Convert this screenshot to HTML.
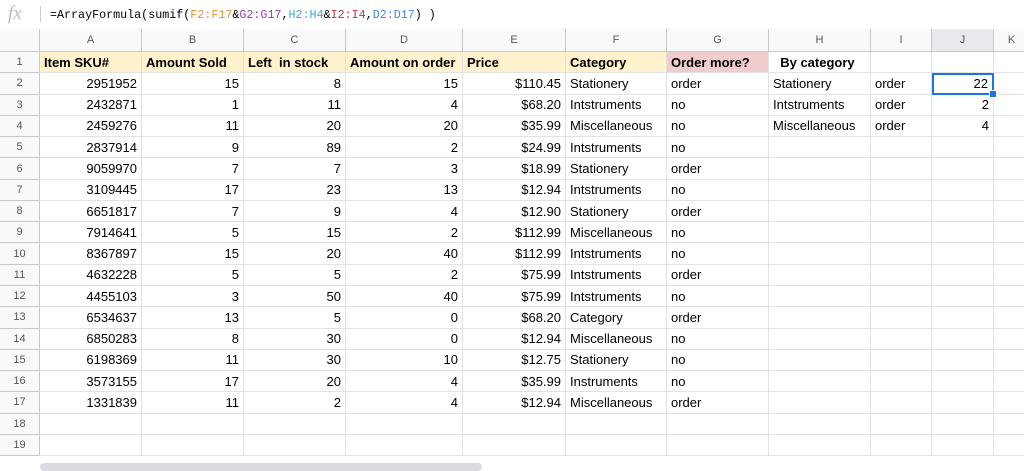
<!DOCTYPE html><html><head><style>
body{margin:0;width:1024px;height:469px;overflow:hidden;background:#fff;font-family:"Liberation Sans",Arial,sans-serif;font-size:13px;color:#000;position:relative}
.fb{position:absolute;left:0;top:0;width:1024px;height:29px;border-bottom:1px solid #c0c0c0;background:#fff}
.fx{position:absolute;left:8px;top:3px;font-family:"Liberation Serif",serif;font-style:italic;color:#bbb;font-size:19px}
.sep{position:absolute;left:40px;top:6px;width:1px;height:16px;background:#ccc}
.fm{position:absolute;left:50px;top:8px;font-family:"Liberation Mono",monospace;font-size:11.7px;color:#000}
.r{position:absolute;left:0;width:1024px}
.c{position:absolute;top:0;bottom:0;border-right:1px solid #e2e2e2;border-bottom:1px solid #e2e2e2;box-sizing:border-box;padding:0 4px;white-space:nowrap;overflow:hidden;display:flex;align-items:center}
.n{justify-content:flex-end}
.h{background:#f8f9fa;color:#555;font-size:11px;justify-content:center;border-color:#c8c8c8}
.b{font-weight:bold}
.y{background:#fff2cc}
.p{background:#f0cccc}
</style></head><body>
<div class="fb"><span class="fx">fx</span><div class="sep"></div><div class="fm">=ArrayFormula(sumif(<span style="color:#f09030">F2:F17</span>&amp;<span style="color:#8e44ad">G2:G17</span>,<span style="color:#3aa8d8">H2:H4</span>&amp;<span style="color:#c0304a">I2:I4</span>,<span style="color:#4285f4">D2:D17</span>) )</div></div>
<div id="g"></div>
<div style="position:absolute;left:40px;top:463px;width:442px;height:8px;background:#dadce0;border-radius:4px"></div>
<script>
const X=[0,40,142,244,346,463,566,667,769,871,932,994,1030];
const L=["","A","B","C","D","E","F","G","H","I","J","K"];
const D=[
["2951952",15,8,15,"$110.45","Stationery","order","Stationery","order",22],
["2432871",1,11,4,"$68.20","Intstruments","no","Intstruments","order",2],
["2459276",11,20,20,"$35.99","Miscellaneous","no","Miscellaneous","order",4],
["2837914",9,89,2,"$24.99","Intstruments","no"],
["9059970",7,7,3,"$18.99","Stationery","order"],
["3109445",17,23,13,"$12.94","Intstruments","no"],
["6651817",7,9,4,"$12.90","Stationery","order"],
["7914641",5,15,2,"$112.99","Miscellaneous","no"],
["8367897",15,20,40,"$112.99","Intstruments","no"],
["4632228",5,5,2,"$75.99","Intstruments","order"],
["4455103",3,50,40,"$75.99","Intstruments","no"],
["6534637",13,5,0,"$68.20","Category","order"],
["6850283",8,30,0,"$12.94","Miscellaneous","no"],
["6198369",11,30,10,"$12.75","Stationery","no"],
["3573155",17,20,4,"$35.99","Instruments","no"],
["1331839",11,2,4,"$12.94","Miscellaneous","order"]];
let h="";
function row(top,ht,cells){h+=`<div class="r" style="top:${top}px;height:${ht}px">`+cells.map((c,i)=>`<div class="c ${c[1]||''}" style="left:${X[i]}px;width:${X[i+1]-X[i]}px;${c[2]||''}">${c[0]}</div>`).join("")+"</div>";}
row(29,23,L.map((l,i)=>[l,"h",i==10?"background:#e8eaed":""]));
const hd=["Item SKU#","Amount Sold","Left&nbsp; in stock","Amount on order","Price","Category","Order more?","&nbsp;&nbsp;By category","",""];
row(52,21.3,[["1","h"]].concat(hd.map((t,i)=>[t,"b "+(i<6?"y":i==6?"p":""),""])).concat([["",""]]));
for(let r=0;r<18;r++){
 const d=D[r]||[];const top=73.3+r*21.27;
 const cells=[[String(r+2),"h"]];
 for(let i=0;i<10;i++){let v=d[i]===undefined?"":d[i];const num=[0,1,2,3,4,9].includes(i);
  let st="";if(r==0&&i==9)st="border:2px solid #1a73e8;";
  cells.push([v,num?"n":"",st]);}
 cells.push(["",""]);
 row(top,21.27,cells);
}
h+='<div style="position:absolute;left:989px;top:90px;width:6px;height:6px;background:#1a73e8;border:1px solid #fff"></div>';
document.getElementById("g").innerHTML=h;
</script>
</body></html>
